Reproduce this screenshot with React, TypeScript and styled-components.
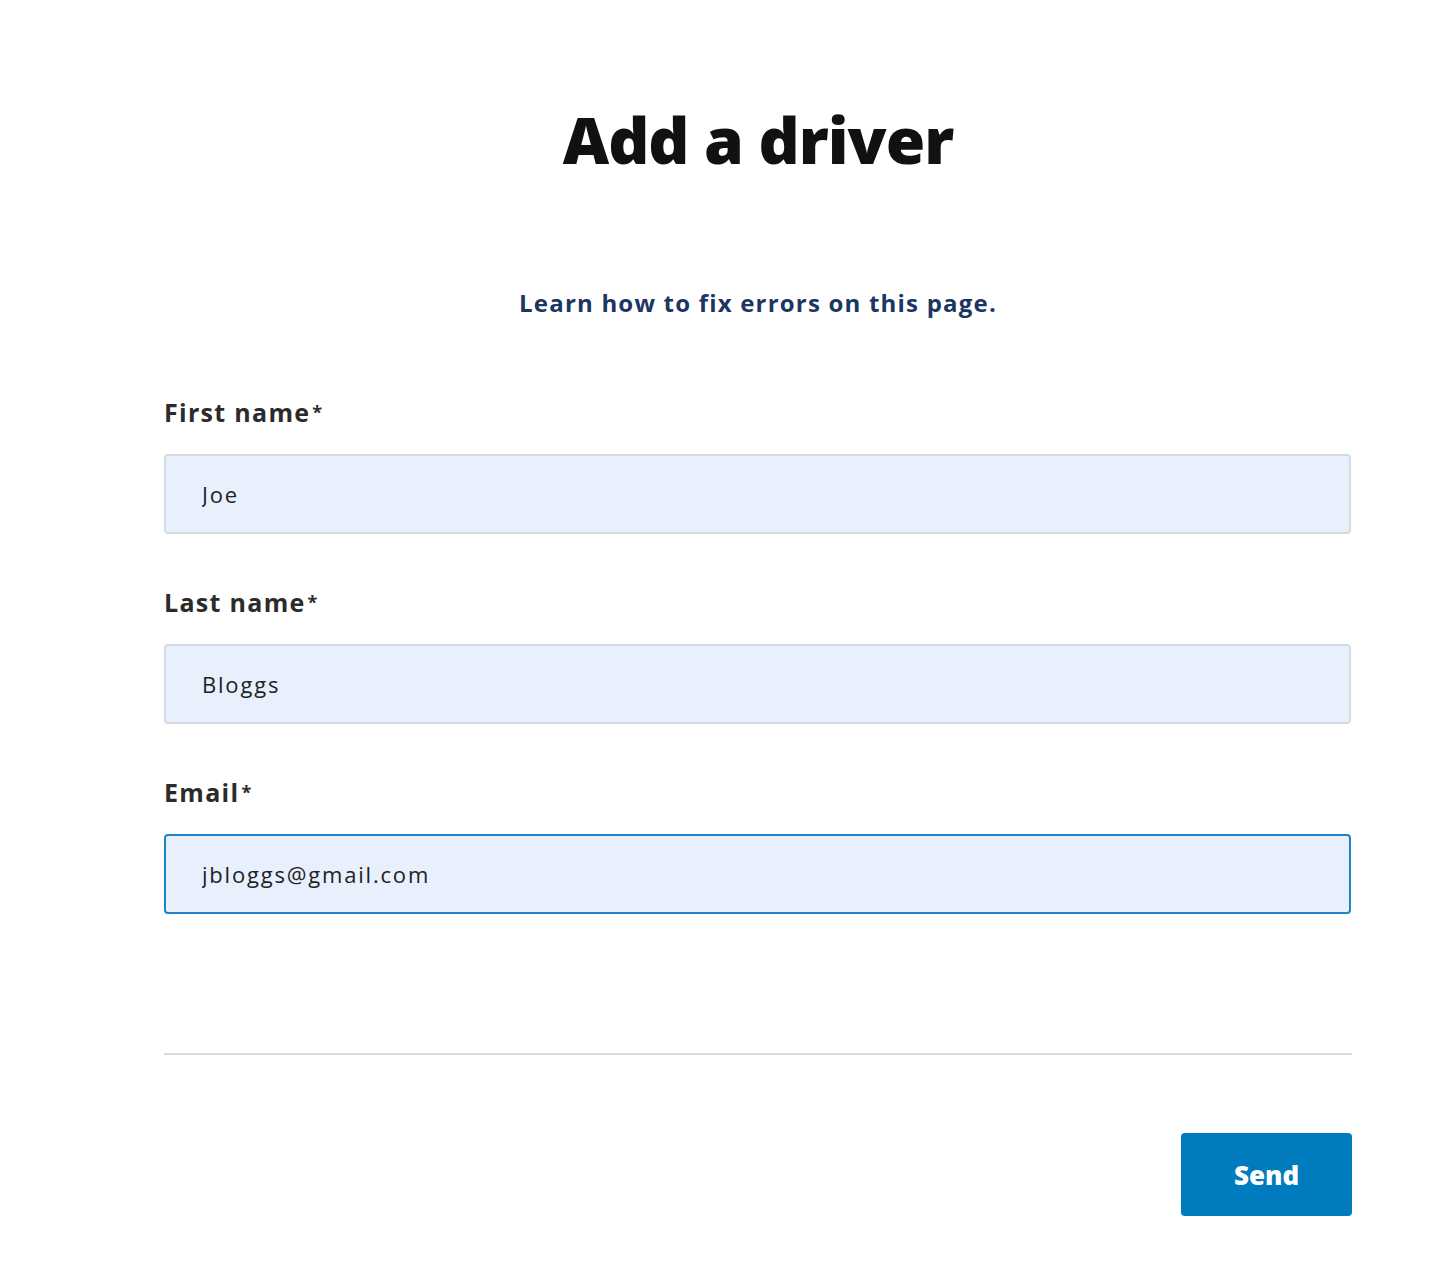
import styled, { createGlobalStyle } from "styled-components"

const GlobalStyle = createGlobalStyle`
	html, body {
		margin: 0;
		padding: 0;
		background: #ffffff;
	}
	body {
		font-family: "Open Sans", "Noto Sans", sans-serif;
		color: #222222;
	}
`

const Page = styled.main`
	width: 1188px;
	margin: 0 0 0 164px;
	padding-top: 102px;
	padding-bottom: 52px;
`

const Title = styled.h1`
	margin: 0;
	text-align: center;
	font-size: 64px;
	line-height: 76px;
	font-weight: 800;
	color: #111111;
	letter-spacing: -1px;
`

const HelpLink = styled.a`
	display: block;
	margin: 110px auto 0;
	text-align: center;
	font-size: 24px;
	line-height: 30px;
	font-weight: 700;
	color: #1c3664;
	text-decoration: none;
	letter-spacing: 1.2px;
`

const Form = styled.form`
	display: flex;
	flex-direction: column;
	margin-top: 78px;
`

const Field = styled.div`
	display: flex;
	flex-direction: column;
	gap: 27px;
	margin-bottom: 52px;
`

const Label = styled.label`
	padding-top: 1px;
	font-size: 25px;
	line-height: 30px;
	font-weight: 700;
	color: #2b2b2b;
	letter-spacing: 1.3px;
`

const Star = styled.span`
	margin-left: 2px;
	font-size: 18px;
	vertical-align: top;
	letter-spacing: 0;
`

const Input = styled.input<{ $focused?: boolean }>`
	box-sizing: border-box;
	width: 1187px;
	height: 80px;
	padding: 0 36px;
	background: #e8f0fe;
	border: 2px solid ${(p) => (p.$focused ? "#1c86c8" : "#d6dbe1")};
	border-radius: 4px;
	font-family: "Open Sans", "Noto Sans", sans-serif;
	font-size: 22px;
	letter-spacing: 1.8px;
	color: #222222;
	outline: none;
	caret-color: #111111;
`

const Divider = styled.hr`
	margin: 87px 0 0;
	border: none;
	border-top: 2px solid #dcdcdc;
`

const Actions = styled.div`
	display: flex;
	justify-content: flex-end;
	margin-top: 78px;
`

const SendButton = styled.button`
	width: 171px;
	height: 83px;
	border: none;
	border-radius: 4px;
	background: #007bbd;
	color: #ffffff;
	font-family: "Open Sans", "Noto Sans", sans-serif;
	font-size: 26px;
	font-weight: 800;
	letter-spacing: 0px;
	cursor: pointer;
`

const fields = [
	{ id: "first", label: "First name", value: "Joe" },
	{ id: "last", label: "Last name", value: "Bloggs" },
	{ id: "email", label: "Email", value: "jbloggs@gmail.com", focused: true },
]

const App = () => (
	<>
		<GlobalStyle />
		<Page>
			<Title>Add a driver</Title>
			<HelpLink href="#">Learn how to fix errors on this page.</HelpLink>
			<Form onSubmit={(e) => e.preventDefault()}>
				{fields.map((f) => (
					<Field key={f.id}>
						<Label htmlFor={f.id}>
							{f.label}
							<Star>*</Star>
						</Label>
						<Input
							id={f.id}
							defaultValue={f.value}
							$focused={f.focused}
							autoFocus={f.focused}
							onFocus={(e) => {
								const len = e.currentTarget.value.length
								e.currentTarget.setSelectionRange(len, len)
							}}
						/>
					</Field>
				))}
			</Form>
			<Divider />
			<Actions>
				<SendButton type="submit">Send</SendButton>
			</Actions>
		</Page>
	</>
)

export default App
